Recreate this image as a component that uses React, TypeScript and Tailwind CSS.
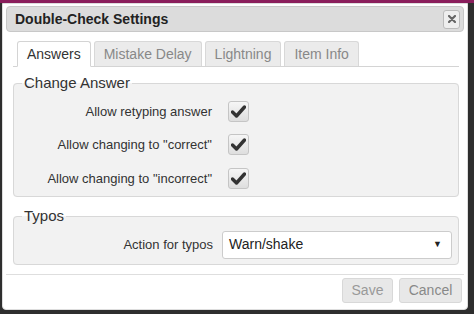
import React from "react";

function Check() {
  return (
    <div className="w-[21px] h-[21px] rounded-[3px] border border-[#c5c5c5] bg-gradient-to-b from-[#f6f6f6] to-[#dedede] flex items-center justify-center">
      <svg width="15" height="13" viewBox="0 0 15 13">
        <path d="M1.5 7 L5.5 11 L13.5 2" stroke="#333" strokeWidth="3.4" fill="none" strokeLinecap="round" strokeLinejoin="round" />
      </svg>
    </div>
  );
}

function Row({ label }: { label: string }) {
  return (
    <div className="flex items-center h-[33.5px]">
      <div className="w-[206px] text-right pr-[16px] text-[#333]">{label}</div>
      <Check />
    </div>
  );
}

export default function App() {
  const tabs = ["Mistake Delay", "Lightning", "Item Info"];
  return (
    <div className="w-[474px] h-[314px] bg-[#2e2e2e] overflow-hidden text-[13px]" style={{ fontFamily: '"Liberation Sans", Arial, sans-serif' }}>
      <div className="h-[3px] bg-[#8a1e5c]" />
      <div className="ml-[2px] w-[466px] h-[307px] bg-white rounded-b-[4px] border border-[#ddd] flex flex-col px-[3px] pt-[2px]">
        {/* title bar */}
        <div className="h-[26px] rounded-[4px] bg-[#dcdcdc] border border-[#c8c8c8] flex items-center pl-[8px] pr-[3px]">
          <div className="font-bold text-[14px] text-[#222] flex-1">Double-Check Settings</div>
          <div className="w-[17px] h-[19px] rounded-[3px] border border-[#bbb] bg-[#eee] flex items-center justify-center">
            <svg width="8" height="8" viewBox="0 0 8 8">
              <path d="M1 1 L7 7 M7 1 L1 7" stroke="#666" strokeWidth="2.2" strokeLinecap="round" />
            </svg>
          </div>
        </div>
        {/* tabs */}
        <div className="mt-[8px] ml-[7px] mr-[5px] flex items-end gap-[3px] pl-[4px] border-b border-[#d4d4d4] h-[27px]">
          <div className="h-[26px] px-[9px] flex items-center bg-white border border-[#d4d4d4] border-b-white rounded-t-[3px] text-[14px] text-[#333] -mb-px">Answers</div>
          {tabs.map((t) => (
            <div key={t} className="h-[25px] px-[9px] flex items-center bg-[#ebebeb] border border-[#d8d8d8] border-b-0 rounded-t-[3px] text-[14px] text-[#888]">{t}</div>
          ))}
        </div>
        {/* Change Answer */}
        <fieldset className="mt-[5px] ml-[7px] mr-[5px] border border-[#d8d8d8] rounded-[4px] bg-[#f2f2f2] px-[8px] pb-[1px] pt-0">
          <legend className="px-[2px] text-[15px] text-[#333]">Change Answer</legend>
          <div className="flex flex-col">
            <Row label="Allow retyping answer" />
            <Row label={'Allow changing to "correct"'} />
            <Row label={'Allow changing to "incorrect"'} />
          </div>
        </fieldset>
        {/* Typos */}
        <fieldset className="mt-[8px] ml-[7px] mr-[5px] border border-[#d8d8d8] rounded-[4px] bg-[#f2f2f2] pl-[8px] pr-[6px] pb-[5px] pt-[3px]">
          <legend className="px-[2px] text-[15px] text-[#333]">Typos</legend>
          <div className="flex items-center">
            <div className="w-[200px] text-right pr-[9px] text-[#333]">Action for typos</div>
            <div className="flex-1 h-[28px] bg-white border border-[#ccc] rounded-[3px] flex items-center pl-[6px] pr-[9px] text-[14px] text-[#222]">
              <span className="flex-1">Warn/shake</span>
              <span className="text-[9px] text-[#222]">▼</span>
            </div>
          </div>
        </fieldset>
        {/* footer */}
        <div className="mt-[9px] border-t border-[#dedede] flex justify-end items-center gap-[6px] pt-[3px] pr-[2px]">
          <div className="h-[25px] w-[51px] rounded-[3px] bg-[#e8e8e8] border border-[#d8d8d8] flex items-center justify-center text-[14px] text-[#999]">Save</div>
          <div className="h-[25px] w-[63px] rounded-[3px] bg-[#e8e8e8] border border-[#d8d8d8] flex items-center justify-center text-[14px] text-[#888]">Cancel</div>
        </div>
      </div>
    </div>
  );
}
